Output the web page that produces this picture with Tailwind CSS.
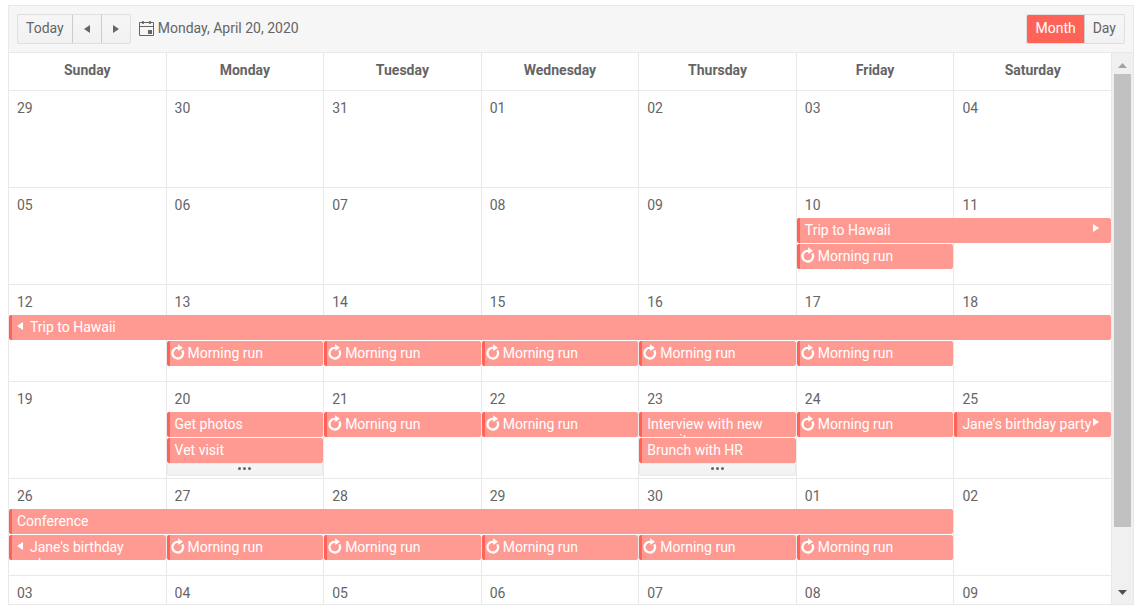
<!DOCTYPE html>
<html lang="en">
<head>
<meta charset="utf-8">
<title>Scheduler</title>
<script src="https://cdn.jsdelivr.net/npm/@tailwindcss/browser@4"></script>
</head>
<body class="bg-white font-['Roboto',sans-serif] text-sm text-[#656565]">
<svg class="hidden" aria-hidden="true">
  <symbol id="repeat" viewBox="0 0 14 16">
    <path d="M11.200 6.300A5.300 5.300 0 1 1 6.800 3.900H8" fill="none" stroke="currentColor" stroke-width="2.300"/>
    <path d="M7 .2L12 3.700L7.400 7z" fill="currentColor"/>
  </symbol>
</svg>
<main class="flex h-screen flex-col px-2 pt-[5px] pb-[7px]">
  <div class="flex min-h-0 flex-1 flex-col border border-[#e9e9e9]">
    <header class="flex items-center border-b border-[#e9e9e9] bg-[#f6f6f6] p-2">
      <div class="flex">
        <button class="h-[30px] rounded-l-xs border border-[#dfdfdf] border-r-[#cccccc] bg-linear-to-b from-[#f6f6f6] to-[#f1f1f1] px-2 pb-0.5">Today</button>
        <button aria-label="Previous" class="flex h-[30px] w-[29px] items-center justify-center border-y border-r border-[#dfdfdf] border-r-[#cccccc] bg-linear-to-b from-[#f6f6f6] to-[#f1f1f1]">
          <svg class="h-2 w-1.5" viewBox="0 0 6 8" fill="currentColor"><path d="M6 0v8L0 4z"/></svg>
        </button>
        <button aria-label="Next" class="flex h-[30px] w-[29px] items-center justify-center rounded-r-xs border-y border-r border-[#dfdfdf] bg-linear-to-b from-[#f6f6f6] to-[#f1f1f1]">
          <svg class="h-2 w-1.5" viewBox="0 0 6 8" fill="currentColor"><path d="M0 0v8l6-4z"/></svg>
        </button>
      </div>
      <button class="ml-2 flex items-center gap-1 pb-0.5">
        <svg class="h-4 w-[15px]" viewBox="0 0 15 16" fill="none" stroke="currentColor">
          <path d="M.5 2.500h14v13H.5zM.5 6.500h14"/>
          <path d="M4 1v3M11 1v3" stroke-width="1.600"/>
          <path d="M9 10h4v4H9z" fill="currentColor" stroke="none"/>
        </svg>
        Monday, April 20, 2020
      </button>
      <div class="ml-auto flex">
        <button class="h-[30px] rounded-l-xs border border-[#dfdfdf] border-r-[#cccccc] bg-[#ff6358] bg-clip-padding px-2 pb-0.5 text-white">Month</button>
        <button class="h-[30px] rounded-r-xs border-y border-r border-[#dfdfdf] bg-linear-to-b from-[#f6f6f6] to-[#f1f1f1] px-2 pb-0.5">Day</button>
      </div>
    </header>
    <div class="flex min-h-0 flex-1">
      <div class="min-w-0 flex-1 overflow-hidden">
        <table class="w-full table-fixed border-separate border-spacing-0">
          <thead><tr id="days"></tr></thead>
          <tbody id="weeks"></tbody>
        </table>
      </div>
      <div class="flex w-[21px] flex-col items-center bg-[#f0f0f0] text-[#505050]" aria-hidden="true">
        <div class="flex h-[21px] items-center pt-1"><svg class="h-[5px] w-[9px] text-[#a3a3a3]" viewBox="0 0 9 5" fill="currentColor"><path d="M0 5h9L4.500 0z"/></svg></div>
        <div class="min-h-0 w-[17px] flex-1"><div class="h-[89%] bg-[#c1c1c1]"></div></div>
        <div class="flex h-[21px] items-center pb-0.5"><svg class="h-[5px] w-[9px]" viewBox="0 0 9 5" fill="currentColor"><path d="M0 0h9L4.500 5z"/></svg></div>
      </div>
    </div>
  </div>
</main>
<script>
const run = { t: 'Morning run', repeat: true };
const spans = {
  1: 'w-full',
  2: 'w-[calc(200%+1px)]',
  6: 'w-[calc(600%+5px)]',
  7: 'w-[calc(700%+6px)]'
};
// Events listed per date cell; null keeps a free slot under a longer event.
const weeks = [
  [['29'], ['30'], ['31'], ['01'], ['02'], ['03'], ['04']],
  [['05'], ['06'], ['07'], ['08'], ['09'], ['10', { t: 'Trip to Hawaii', span: 2, next: true }, run], ['11']],
  [['12', { t: 'Trip to Hawaii', span: 7, prev: true }], ['13', null, run], ['14', null, run], ['15', null, run], ['16', null, run], ['17', null, run], ['18']],
  [['19'], ['20', { t: 'Get photos' }, { t: 'Vet visit' }, 'more'], ['21', run], ['22', run], ['23', { t: 'Interview with new recruit' }, { t: 'Brunch with HR' }, 'more'], ['24', run], ['25', { t: "Jane's birthday party", next: true }]],
  [['26', { t: 'Conference', span: 6 }, { t: "Jane's birthday party", prev: true, narrow: true }], ['27', null, run], ['28', null, run], ['29', null, run], ['30', null, run], ['01', null, run], ['02']],
  [['03'], ['04'], ['05'], ['06'], ['07'], ['08'], ['09']]
];
const item = e => {
  if (e === null) return '<div class="h-[26px]"></div>';
  if (e === 'more') return `<button aria-label="More events" class="-mt-px flex h-[13px] w-full items-center justify-center rounded-xs border border-[#ebebeb] bg-linear-to-b from-[#f6f6f6] to-[#f1f1f1] pb-0.5"><svg class="h-[3px] w-[13px]" viewBox="0 0 13 3" fill="currentColor"><circle cx="1.500" cy="1.500" r="1.500"/><circle cx="6.500" cy="1.500" r="1.500"/><circle cx="11.500" cy="1.500" r="1.500"/></svg></button>`;
  const pad = e.repeat ? 'pl-px' : e.narrow ? 'pl-[5px] pr-6' : 'pl-[5px]';
  return `<div class="relative z-10 mb-px h-[25px] overflow-hidden rounded-xs border-l-3 border-[#ff6358] bg-[#ff9a93] pt-1 leading-4 text-white ${pad} ${spans[e.span || 1]}">` +
    (e.repeat ? '<svg class="-mt-1 mr-[3px] inline-block h-4 w-3.5 align-[-2px]"><use href="#repeat"/></svg>' : '') +
    (e.prev ? '<svg class="mr-[7px] inline-block h-2 w-1.5 align-[2px]" viewBox="0 0 6 8" fill="currentColor"><path d="M6 0v8L0 4z"/></svg>' : '') +
    e.t +
    (e.next ? '<svg class="absolute top-1.5 right-3 h-2 w-1.5" viewBox="0 0 6 8" fill="currentColor"><path d="M0 0v8l6-4z"/></svg>' : '') +
    '</div>';
};
document.getElementById('days').innerHTML =
  ['Sunday', 'Monday', 'Tuesday', 'Wednesday', 'Thursday', 'Friday', 'Saturday']
    .map(d => `<th scope="col" class="h-[38px] border-r border-b border-[#e9e9e9] pb-1 font-bold">${d}</th>`).join('');
document.getElementById('weeks').innerHTML = weeks.map(w => '<tr>' + w.map(([d, ...ev]) =>
  `<td class="h-[97px] border-r border-b border-[#e9e9e9] align-top"><div class="h-[30px] px-2 pt-[7px] leading-5">${d}</div>${ev.map(item).join('')}</td>`).join('') + '</tr>').join('');
</script>
</body>
</html>
